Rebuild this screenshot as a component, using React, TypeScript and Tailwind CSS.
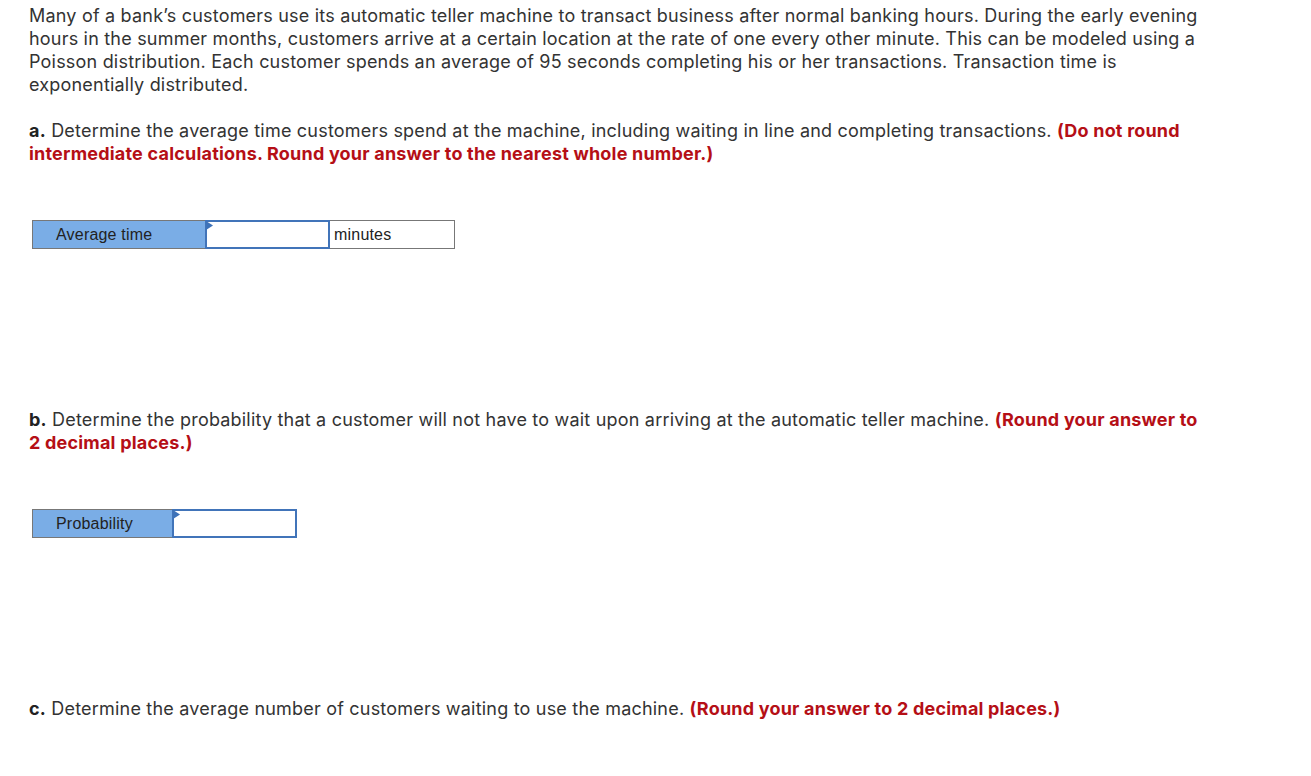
import React from 'react';

const Marker = () => (
  <svg className="absolute left-[-1px] top-[-1px]" width="7" height="9" viewBox="0 0 7 9">
    <path d="M0 0 L7 4.5 L0 9 Z" fill="#3d72b8" />
  </svg>
);

const AnswerRow = ({ label, labelWidth, unit }: { label: string; labelWidth: string; unit?: string }) => (
  <div className="flex h-[29px] font-['Liberation_Sans',Arial,sans-serif] text-[16px] text-[#222]">
    <div className={`${labelWidth} flex items-center border border-r-0 border-[#777] bg-[#7aade6] pl-[23px]`}>{label}</div>
    <div className="relative w-[125px] border-2 border-[#4174b9] bg-white">
      <Marker />
    </div>
    {unit && (
      <div className="flex w-[125px] items-center border border-l-0 border-[#777] bg-white pl-[4px]">{unit}</div>
    )}
  </div>
);

export default function App() {
  return (
    <div className="min-h-screen bg-white pl-[29px] pt-[4px] font-['Inter',sans-serif] text-[18px] leading-[23px] tracking-[0.2px] text-[#333]">
      <div className="w-[1181px]">
        <p>
          Many of a bank’s customers use its automatic teller machine to transact business after normal banking hours. During the early evening hours in the summer months, customers arrive at a certain location at the rate of one every other minute. This can be modeled using a Poisson distribution. Each customer spends an average of 95 seconds completing his or her transactions. Transaction time is exponentially distributed.
        </p>

        <p className="mt-[23px]">
          <b className="font-bold text-[#222]">a.</b> Determine the average time customers spend at the machine, including waiting in line and completing transactions.{' '}
          <b className="font-bold text-[#b50f16]">(Do not round intermediate calculations. Round your answer to the nearest whole number.)</b>
        </p>
        <div className="ml-[3px] mt-[55px]">
          <AnswerRow label="Average time" labelWidth="w-[173px]" unit="minutes" />
        </div>

        <p className="mt-[159px]">
          <b className="font-bold text-[#222]">b.</b> Determine the probability that a customer will not have to wait upon arriving at the automatic teller machine.{' '}
          <b className="font-bold text-[#b50f16]">(Round your answer to 2 decimal places.)</b>
        </p>
        <div className="ml-[3px] mt-[55px]">
          <AnswerRow label="Probability" labelWidth="w-[140px]" />
        </div>

        <p className="mt-[159px]">
          <b className="font-bold text-[#222]">c.</b> Determine the average number of customers waiting to use the machine.{' '}
          <b className="font-bold text-[#b50f16]">(Round your answer to 2 decimal places.)</b>
        </p>
      </div>
    </div>
  );
}
